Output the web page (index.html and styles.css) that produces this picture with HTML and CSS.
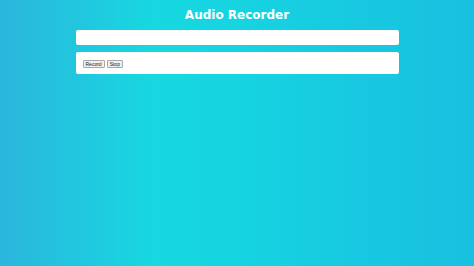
FILE: index.html
```html
<!DOCTYPE html>
<html>
<head>
<meta charset="utf-8">
<link rel="stylesheet" href="styles.css">
</head>
<body>
<h1 class="title">Audio Recorder</h1>
<main class="container">
  <section class="panel panel-top"></section>
  <section class="panel panel-controls">
    <button class="btn">Record</button>
    <button class="btn">Stop</button>
  </section>
</main>
</body>
</html>
```
FILE: styles.css
```css
html, body {
  margin: 0;
  padding: 0;
  height: 100%;
}
body {
  background: linear-gradient(to right, #2cb6dc 0%, #20c8df 18%, #17d8e0 32%, #16d4e0 50%, #17cae0 72%, #19c0e0 100%);
  font-family: "DejaVu Sans", Verdana, sans-serif;
  min-height: 266px;
  overflow: hidden;
}
.title {
  margin: 0;
  padding-top: 9px;
  height: 21px;
  line-height: 13px;
  font-size: 12px;
  font-weight: bold;
  color: #ffffff;
  text-align: center;
}
.container {
  width: 323px;
  margin: 0 auto;
  display: flex;
  flex-direction: column;
  gap: 7px;
}
.panel {
  background: #ffffff;
  border-radius: 2px;
}
.panel-top {
  height: 15px;
}
.panel-controls {
  height: 22px;
  box-sizing: border-box;
  padding: 8px 7px 6px;
  display: flex;
  align-items: center;
  gap: 2px;
}
.btn {
  font-family: "Liberation Sans", Arial, sans-serif;
  font-size: 5px;
  line-height: 6px;
  height: 8px;
  padding: 0 2px;
  margin: 0;
  border: 1px solid #a8a8a8;
  border-radius: 1px;
  background: #f0f0f0;
  color: #222;
}
```
